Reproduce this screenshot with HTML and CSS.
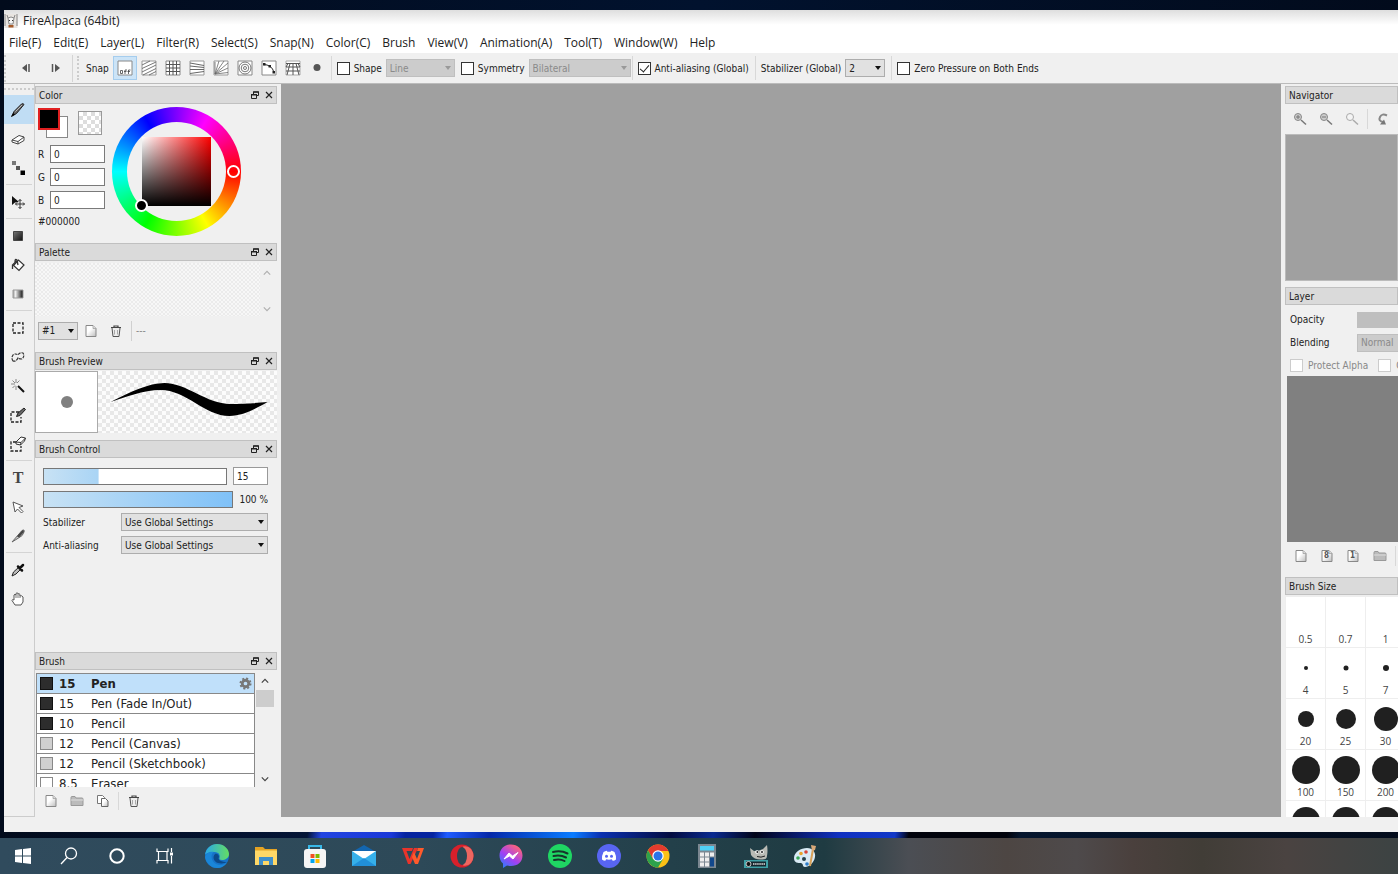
FILE: index.html
```html
<!DOCTYPE html>
<html lang="en">
<head>
    <meta charset="UTF-8">
    <meta name="viewport" content="width=device-width, initial-scale=1.0">
    <title>FireAlpaca (64bit)</title>
    <link rel="stylesheet" href="styles.css">
</head>
<body>

<!-- shared icons -->
<svg class="defs" aria-hidden="true">
    <defs>
        <linearGradient id="paper" x1="0" y1="0" x2="1" y2="1"><stop offset="0.4" stop-color="#fff"/><stop offset="1" stop-color="#bbb"/></linearGradient>
        <linearGradient id="black" x1="0" y1="0" x2="1" y2="1"><stop offset="0" stop-color="#777"/><stop offset="1" stop-color="#111"/></linearGradient>
        <linearGradient id="fade"><stop offset="0" stop-color="#999"/><stop offset="0.25" stop-color="#eee"/><stop offset="1" stop-color="#111"/></linearGradient>
    </defs>
    <symbol id="float" viewBox="0 0 8 8"><path d="M2.5 3V.8h5v3.7H5.5M.5 3.5h5v4h-5z" fill="none" stroke="#222"/><path d="M2 .4h6v1.4H2zM0 3h6v1.4H0z" fill="#222"/></symbol>
    <symbol id="close" viewBox="0 0 8 8"><path d="M1 1l6 6M7 1L1 7" stroke="#222" stroke-width="1.2"/></symbol>
    <symbol id="page" viewBox="0 0 12 12"><path d="M1 .5h7l3 3v8H1z" fill="url(#paper)" stroke="#888"/><path d="M8 .5v3h3" fill="#ddd" stroke="#999" stroke-width=".7"/></symbol>
    <symbol id="pages" viewBox="0 0 12 12"><path d="M.5.5h5l2 2v6h-7z" fill="#fff" stroke="#777"/><path d="M4.500 3.500h4l2.500 2.500v5.500H4.500z" fill="url(#paper)" stroke="#666"/></symbol>
    <symbol id="folder" viewBox="0 0 14 12"><path d="M1 10.500V2.500q0-1 1-1h3l1 1.500h6q1 0 1 1v6.500z" fill="#bbb" stroke="#999"/><path d="M1 5h12" stroke="#ddd"/></symbol>
    <symbol id="trash" viewBox="0 0 12 12"><path d="M2 3l1 8.500h6L10 3" fill="#eee" stroke="#555"/><path d="M1 2.500h10M4 2.500V1h4v1.500" fill="none" stroke="#444" stroke-width="1.200"/><path d="M4.500 5v4.500M7.500 5v4.500" stroke="#aaa"/></symbol>
    <symbol id="up" viewBox="0 0 10 6"><path d="M1 5l4-4 4 4" fill="none" stroke="currentColor" stroke-width="1.500"/></symbol>
    <symbol id="down" viewBox="0 0 10 6"><path d="M1 1l4 4 4-4" fill="none" stroke="currentColor" stroke-width="1.500"/></symbol>
</svg>

<main class="window">
    <header class="titlebar">
        <svg class="app-icon" viewBox="0 0 14 16"><rect x=".5" y="1" width="13" height="14" fill="#e8e4e0"/><path d="M1 1v12M13 1v12M3 2l1 3M11 2l-1 3M4 5q3-2 6 0l-1 6H5z" fill="#f6f6f6" stroke="#888"/><path d="M5 7.500h1M8 7.500h1" stroke="#333"/><path d="M4.500 12h5v2.500h-5z" fill="#a65a2a"/></svg>
        <h1>FireAlpaca (64bit)</h1>
    </header>

    <nav class="menubar">
        <button>File(F)</button>
        <button>Edit(E)</button>
        <button>Layer(L)</button>
        <button>Filter(R)</button>
        <button>Select(S)</button>
        <button>Snap(N)</button>
        <button>Color(C)</button>
        <button>Brush</button>
        <button>View(V)</button>
        <button>Animation(A)</button>
        <button>Tool(T)</button>
        <button>Window(W)</button>
        <button>Help</button>
    </nav>

    <div class="toolbar">
        <div class="history">
            <button aria-label="Previous"><svg width="10" height="10" viewBox="0 0 10 10"><path d="M6 1v8L1 5z" fill="#555"/><path d="M8 1v8" stroke="#555" stroke-width="1.500"/></svg></button>
            <button aria-label="Next"><svg width="10" height="10" viewBox="0 0 10 10"><path d="M4 1v8l5-4z" fill="#555"/><path d="M1.500 1v8" stroke="#555" stroke-width="1.500"/></svg></button>
        </div>
        <div class="snap">
            <span>Snap</span>
            <div class="snap-buttons">
                <button class="active" aria-label="Snap off"><svg viewBox="0 0 16 16"><path d="M1 1h14v14H1z" fill="#fff" stroke="#888"/><path d="M3.500 10.500h2v3h-2zM8 14v-4h2M7 11.500h2.500M11.500 14v-4h2M10.500 11.500H13" fill="none" stroke="#444" stroke-width=".8"/></svg></button>
                <button aria-label="Parallel snap"><svg viewBox="0 0 16 16"><path d="M1 1h14v14H1z" fill="#fff" stroke="#999"/><path d="M1 5l8-4M1 8.500L15 2M1 12l14-7M2 15l13-6.500M8 15l7-3.500" stroke="#666" stroke-width=".9"/></svg></button>
                <button aria-label="Grid snap"><svg viewBox="0 0 16 16"><path d="M1 1h14v14H1z" fill="#fff" stroke="#888"/><path d="M4.500 1v14M8 1v14M11.500 1v14M1 4.500h14M1 8h14M1 11.500h14" stroke="#555"/></svg></button>
                <button aria-label="Vanishing snap"><svg viewBox="0 0 16 16"><path d="M1 1h14v14H1z" fill="#fff" stroke="#999"/><path d="M1 3l14 2.500M1 6l14 1.500M1 9.500h14M1 13.500l14-2" stroke="#666"/></svg></button>
                <button aria-label="Radial snap"><svg viewBox="0 0 16 16"><path d="M1 1h14v14H1z" fill="#fff" stroke="#999"/><path d="M2 14V2M2 14L6 1M2 14L11 1M2 14L15 3M2 14l13-6M2 14l13-1.500" stroke="#666" stroke-width=".8"/></svg></button>
                <button aria-label="Circle snap"><svg viewBox="0 0 16 16"><g fill="none" stroke="#777"><path d="M1 1h14v14H1z" fill="#fff" stroke="#888"/><circle cx="8" cy="8" r="6"/><circle cx="8" cy="8" r="3.800"/><circle cx="8" cy="8" r="1.500"/></g></svg></button>
                <button aria-label="Curve snap"><svg viewBox="0 0 16 16"><path d="M1 1h14v14H1z" fill="#fff" stroke="#888"/><path d="M2 4.500q9 0 11 8" fill="none" stroke="#222"/><path d="M2 3h2.500v2.500H2zM7.500 5h2.500v2.500H7.500zM11.500 11H14v2.500h-2.500z" fill="#222"/></svg></button>
                <button aria-label="Perspective snap"><svg viewBox="0 0 16 16"><path d="M1 1h14v14H1z" fill="#fff" stroke="#aaa"/><path d="M1 3.500h14M1 7h14M1 11h14M5 3.500L2 15M8 3.500V15M11 3.500L14 15M3 3.500L1 7M13 3.500L15 7" stroke="#555"/></svg></button>
                <button aria-label="Snap settings"><svg viewBox="0 0 16 16"><circle cx="8" cy="7.500" r="3.500" fill="#555"/></svg></button>
            </div>
        </div>
        <div class="group">
            <input type="checkbox" id="shape"><label for="shape">Shape</label>
            <span class="select off shape-select"><select aria-label="Shape type" disabled><option>Line</option></select></span>
        </div>
        <div class="group plain">
            <input type="checkbox" id="symmetry"><label for="symmetry">Symmetry</label>
            <span class="select off symmetry-select"><select aria-label="Symmetry type" disabled><option>Bilateral</option></select></span>
        </div>
        <div class="group">
            <input type="checkbox" id="aa" checked><label for="aa">Anti-aliasing (Global)</label>
        </div>
        <div class="group">
            <label for="stab">Stabilizer (Global)</label>
            <span class="select stab-select"><select id="stab"><option>2</option></select></span>
        </div>
        <div class="group">
            <input type="checkbox" id="zero"><label for="zero">Zero Pressure on Both Ends</label>
        </div>
    </div>

    <div class="workspace">
        <aside class="toolbox">
            <button class="active" aria-label="Brush"><svg viewBox="0 0 16 16"><path d="M1.500 14.500L4 9.500 11.500 2q1.500-1 2.500.5L6.500 11.500z" fill="#666" stroke="#222"/><path d="M1.500 14.500l2-3.500 1.500 1.500z" fill="#000"/><path d="M5.500 9.500L12 3" stroke="#bbb"/></svg></button>
            <button aria-label="Eraser"><svg viewBox="0 0 16 16"><path d="M2 9l7-4.500 5 1.500v3.500L8 13l-6-2z" fill="#fff" stroke="#444"/><path d="M2 9l6 1.500 6-4.500M8 10.500V13" fill="none" stroke="#444"/></svg></button>
            <button aria-label="Dot tool"><svg viewBox="0 0 16 16"><path d="M2 1h4v4H2z" fill="#777"/><path d="M6 6h4v4H6z" fill="#555"/><path d="M10.500 10.500h4.500V15h-4.500z" fill="#000"/></svg></button>
            <hr>
            <button aria-label="Move"><svg viewBox="0 0 16 16"><path d="M2 2v9l3-2.500 4-.5z" fill="#111"/><path d="M10 5.500v9M5.500 10h9M8.500 7L10 5.500 11.500 7M8.500 13l1.500 1.500 1.500-1.500M7 8.500L5.500 10 7 11.500M13 8.500l1.500 1.500-1.500 1.500" fill="none" stroke="#333"/></svg></button>
            <hr>
            <button aria-label="Fill shape"><svg viewBox="0 0 16 16"><path d="M3.500 3.500h9v9h-9z" fill="url(#black)" stroke="#444"/></svg></button>
            <button aria-label="Bucket"><svg viewBox="0 0 16 16"><path d="M3.500 8.500L8.500 3l5.500 5-5 5.500z" fill="#fff" stroke="#333" stroke-width="1.200"/><path d="M2.500 12V8l4-4M8 8l-1-5q-2-2-2 2" fill="none" stroke="#333" stroke-width="1.300"/></svg></button>
            <button aria-label="Gradient"><svg viewBox="0 0 16 16"><path d="M3 4h10v8H3z" fill="url(#fade)" stroke="#999"/></svg></button>
            <hr>
            <button aria-label="Select"><svg viewBox="0 0 16 16"><path d="M3 3h10v10H3z" fill="none" stroke="#222" stroke-width="1.300" stroke-dasharray="3 1.500"/></svg></button>
            <button aria-label="Lasso"><svg viewBox="0 0 16 16"><path d="M3 12q-2-3 0-6 3-2 5 0 2-3 5-2 2 3-1 6-3 0-4-1-2 4-5 3z" fill="none" stroke="#333" stroke-width="1.200" stroke-dasharray="3 1"/></svg></button>
            <button aria-label="Magic wand"><svg viewBox="0 0 16 16"><path d="M8 8l6 6" stroke="#111" stroke-width="2"/><path d="M6 1v4M6 8v4M1 6h4M2.500 2.500L5 5M9.500 2.500L7 5M2.500 10L5 7.500" stroke="#888"/></svg></button>
            <button aria-label="Select pen"><svg viewBox="0 0 16 16"><path d="M9 5H1v10h10v-5" fill="none" stroke="#222" stroke-width="1.300" stroke-dasharray="3 1.500"/><path d="M6.500 9.500L8 6l6-5 1.500 1.500L10 8.500z" fill="#666" stroke="#222"/></svg></button>
            <button aria-label="Select eraser"><svg viewBox="0 0 16 16"><path d="M6 6H1v9h10v-5" fill="none" stroke="#222" stroke-width="1.300" stroke-dasharray="3 1.500"/><path d="M6 6l5-5 4.500 1-1 3-4 4-4.500-1z" fill="#fff" stroke="#333"/><path d="M6 6l5 .5 4.500-4.500M11 6.500L10.500 9" fill="none" stroke="#333"/></svg></button>
            <hr>
            <button aria-label="Text" class="text-tool">T</button>
            <button aria-label="Operation"><svg viewBox="0 0 16 16"><path d="M3 3l10 4-4 1.500 4 4-1.500 1.500-4-4L5 13z" fill="#fff" stroke="#555"/></svg></button>
            <button aria-label="Divide"><svg viewBox="0 0 16 16"><path d="M2 14L12 2.500q3-1.500 2 1.500-1 4-5.500 6z" fill="#ccc" stroke="#666"/><path d="M7 8.500l5-6q3-1 1.500 2L9 9.500z" fill="#444"/></svg></button>
            <hr>
            <button aria-label="Eyedropper"><svg viewBox="0 0 16 16"><path d="M2 14l1.500-4L9 5l2 2-5 5z" fill="#bbb" stroke="#222"/><path d="M8 4.500l4 4M10 6l3-3" stroke="#111" stroke-width="2.500" stroke-linecap="round"/></svg></button>
            <button aria-label="Hand"><svg viewBox="0 0 16 16"><path d="M5 14L2 9.500q0-1.500 2-.5V4q1-1.500 2 0V2.500q1-1.500 2 0V3q1-1 2 .5V5q1.500-1 3 1v5l-2 3z" fill="#fff" stroke="#555"/><path d="M6 4v3M8 3v4M10 4v3" stroke="#777"/></svg></button>
        </aside>

        <div class="dock left-dock">
            <section class="panel color-panel">
                <header><h2>Color</h2><button aria-label="Float"><svg><use href="#float"/></svg></button><button aria-label="Close"><svg><use href="#close"/></svg></button></header>
                <div class="color-body">
                    <div class="color-side">
                        <div class="swatches">
                            <div class="fg-bg"><span class="bg"></span><span class="fg"></span></div>
                            <span class="transparent"></span>
                        </div>
                        <div class="channel"><label for="r">R</label><input type="text" id="r" value="0"></div>
                        <div class="channel"><label for="g">G</label><input type="text" id="g" value="0"></div>
                        <div class="channel"><label for="b">B</label><input type="text" id="b" value="0"></div>
                        <p>#000000</p>
                    </div>
                    <div class="wheel">
                        <div class="wheel-hole"><div class="sv-box"></div></div>
                        <span class="hue-mark"></span>
                        <span class="sv-mark"></span>
                    </div>
                </div>
            </section>

            <section class="panel palette-panel">
                <header><h2>Palette</h2><button aria-label="Float"><svg><use href="#float"/></svg></button><button aria-label="Close"><svg><use href="#close"/></svg></button></header>
                <div class="palette-body">
                    <div class="palette-grid"></div>
                    <div class="palette-scroll"><svg><use href="#up"/></svg><svg><use href="#down"/></svg></div>
                </div>
                <div class="palette-tools">
                    <span class="select palette-select"><select aria-label="Palette number"><option>#1</option></select></span>
                    <button aria-label="Add color"><svg class="icon"><use href="#page"/></svg></button>
                    <button aria-label="Delete color"><svg class="icon"><use href="#trash"/></svg></button>
                    <span class="palette-name">---</span>
                </div>
            </section>

            <section class="panel preview-panel">
                <header><h2>Brush Preview</h2><button aria-label="Float"><svg><use href="#float"/></svg></button><button aria-label="Close"><svg><use href="#close"/></svg></button></header>
                <div class="preview-body">
                    <div class="preview-dot"><span></span></div>
                    <div class="preview-stroke">
                        <svg viewBox="0 0 178 62"><path d="M12 31C32 21 50 12 66 12c22 0 42 21 66 21 12 0 25-1 37-2-9 5-24 14-38 14C106 45 88 19 62 19 44 19 28 26 12 31z" fill="#000"/></svg>
                    </div>
                </div>
            </section>

            <section class="panel control-panel">
                <header><h2>Brush Control</h2><button aria-label="Float"><svg><use href="#float"/></svg></button><button aria-label="Close"><svg><use href="#close"/></svg></button></header>
                <div class="control-body">
                    <div class="control-row size-row">
                        <input type="range" class="slider size-slider" aria-label="Size" value="30">
                        <input type="text" aria-label="Size value" value="15">
                    </div>
                    <div class="control-row">
                        <input type="range" class="slider" id="opacity" value="100">
                        <label for="opacity">100 %</label>
                    </div>
                    <div class="control-row">
                        <label class="name" for="brush-stab">Stabilizer</label>
                        <span class="select"><select id="brush-stab"><option>Use Global Settings</option></select></span>
                    </div>
                    <div class="control-row">
                        <label class="name" for="brush-aa">Anti-aliasing</label>
                        <span class="select"><select id="brush-aa"><option>Use Global Settings</option></select></span>
                    </div>
                </div>
            </section>

            <section class="panel brush-panel">
                <header><h2>Brush</h2><button aria-label="Float"><svg><use href="#float"/></svg></button><button aria-label="Close"><svg><use href="#close"/></svg></button></header>
                <div class="brush-body">
                    <ul class="brush-list">
                        <li class="active"><i class="chip dark"></i><span>15</span>Pen
                            <svg class="gear" viewBox="0 0 14 14"><circle cx="7" cy="7" r="5.500" fill="none" stroke="#777" stroke-width="2" stroke-dasharray="2.200 2.120"/><circle cx="7" cy="7" r="3.500" fill="none" stroke="#777" stroke-width="3"/></svg>
                        </li>
                        <li><i class="chip dark"></i><span>15</span>Pen (Fade In/Out)</li>
                        <li><i class="chip dark"></i><span>10</span>Pencil</li>
                        <li><i class="chip grey"></i><span>12</span>Pencil (Canvas)</li>
                        <li><i class="chip grey"></i><span>12</span>Pencil (Sketchbook)</li>
                        <li><i class="chip"></i><span>8.5</span>Eraser</li>
                    </ul>
                    <div class="brush-scroll"><svg><use href="#up"/></svg><i></i><svg><use href="#down"/></svg></div>
                </div>
                <div class="brush-tools">
                    <button aria-label="Add brush"><svg class="icon"><use href="#page"/></svg></button>
                    <button aria-label="Add folder"><svg class="icon wide"><use href="#folder"/></svg></button>
                    <button aria-label="Duplicate brush"><svg class="icon"><use href="#pages"/></svg></button>
                    <button class="split" aria-label="Delete brush"><svg class="icon"><use href="#trash"/></svg></button>
                </div>
            </section>
        </div>

        <div class="canvas"></div>

        <div class="dock right-dock">
            <section class="panel">
                <header><h2>Navigator</h2></header>
                <div class="nav-tools">
                    <button aria-label="Zoom in"><svg viewBox="0 0 14 14"><circle cx="5" cy="5" r="3.500" fill="#ccc" stroke="#888"/><path d="M3 5h4M5 3v4" stroke="#777"/><path d="M8 8l5 4.500" stroke="#777" stroke-width="1.500"/></svg></button>
                    <button aria-label="Zoom out"><svg viewBox="0 0 14 14"><circle cx="5" cy="5" r="3.500" fill="#ccc" stroke="#888"/><path d="M3 5h4" stroke="#777"/><path d="M8 8l5 4.500" stroke="#777" stroke-width="1.500"/></svg></button>
                    <button aria-label="Fit"><svg viewBox="0 0 14 14"><circle cx="5" cy="5" r="3.500" fill="#f4f4f4" stroke="#aaa"/><path d="M8 8l5 4.500" stroke="#aaa" stroke-width="1.500"/></svg></button>
                    <button class="split" aria-label="Rotate left"><svg viewBox="0 0 14 14"><path d="M10 3.500Q5 1 3 5t3 5" fill="none" stroke="#888" stroke-width="2"/><path d="M3 12.500L7 7.500l2 5z" fill="#777"/></svg></button>
                </div>
                <div class="nav-view"></div>
            </section>

            <section class="panel layer-panel">
                <header><h2>Layer</h2></header>
                <div class="layer-row"><label for="layer-opacity">Opacity</label><input type="range" id="layer-opacity" class="layer-slider" disabled></div>
                <div class="layer-row"><label for="blending">Blending</label><span class="select off"><select id="blending" disabled><option>Normal</option></select></span></div>
                <div class="layer-checks">
                    <input type="checkbox" id="alpha" disabled><label for="alpha">Protect Alpha</label>
                    <input type="checkbox" id="clip" disabled><label for="clip">Clipping</label>
                </div>
                <div class="layer-list"></div>
                <div class="layer-tools">
                    <button aria-label="Add layer"><svg class="icon"><use href="#page"/></svg></button>
                    <button aria-label="Add 8bit layer"><svg class="icon"><use href="#page"/></svg><b>8</b></button>
                    <button aria-label="Add 1bit layer"><svg class="icon"><use href="#page"/></svg><b>1</b></button>
                    <button aria-label="Add folder"><svg class="icon wide"><use href="#folder"/></svg></button>
                    <hr>
                </div>
            </section>

            <section class="panel size-panel">
                <header><h2>Brush Size</h2></header>
                <div class="size-grid">
                    <button><i></i>0.5</button>
                    <button><i></i>0.7</button>
                    <button><i></i>1</button>
                    <button><i class="d4"></i>4</button>
                    <button><i class="d5"></i>5</button>
                    <button><i class="d7"></i>7</button>
                    <button><i class="d20"></i>20</button>
                    <button><i class="d25"></i>25</button>
                    <button><i class="d30"></i>30</button>
                    <button><i class="full"></i>100</button>
                    <button><i class="full"></i>150</button>
                    <button><i class="full"></i>200</button>
                    <button aria-label="300"><i class="full"></i></button>
                    <button aria-label="400"><i class="full"></i></button>
                    <button aria-label="500"><i class="full"></i></button>
                </div>
            </section>
        </div>
    </div>
    <footer class="statusbar"></footer>
</main>

<div class="wallpaper"></div>

<nav class="taskbar">
    <button class="sys" aria-label="Start"><svg viewBox="0 0 24 24"><path d="M4 6l7-1v6.500H4zM12 4.900L20 4v7.500h-8zM4 12.500h7V19l-7-1zM12 12.500h8V20l-8-.9z" fill="#fff"/></svg></button>
    <button class="sys" aria-label="Search"><svg viewBox="0 0 24 24"><circle cx="14" cy="9.500" r="5.500" fill="none" stroke="#fff" stroke-width="1.300"/><path d="M10 13.500l-6 6.500" stroke="#fff" stroke-width="1.300"/></svg></button>
    <button class="sys" aria-label="Cortana"><svg viewBox="0 0 24 24"><circle cx="12" cy="12" r="6.700" fill="none" stroke="#fff" stroke-width="2"/></svg></button>
    <button class="sys" aria-label="Task view"><svg viewBox="0 0 24 24"><path d="M4 4.500v3h11v-3M5.500 7.500v9h8.500v-9M4 19.500v-3h11v3M18.500 4v4M18.500 12v7.500" fill="none" stroke="#fff" stroke-width="1.200"/><path d="M17 8.500h3v3h-3z" fill="#fff"/></svg></button>
    <button aria-label="Edge"><svg viewBox="0 0 24 24"><defs><linearGradient id="edge"><stop offset="0" stop-color="#2aa8e8"/><stop offset="1" stop-color="#64dd62"/></linearGradient></defs><circle cx="12" cy="12" r="12" fill="#1673c8"/><path d="M0 11C1 4 6 0 12 0c7 0 12 5 12 10 0 4-4 6-7 6-2 0-3-1-2.500-2 .8-2 0-6-5-6C5 8 1 9 0 11z" fill="url(#edge)"/><path d="M9 8c-4 2-3 9 2 12 4 2 8 1 11-2-2 4-6 6-10 6C6 24 1 19 0 13c1-4 5-6 9-5z" fill="#1a86d8"/><path d="M10 10c-3 3-1 8 3 9 4 1 7 0 9-1-5 0-10-2-8-5 0-2-2-4-4-3z" fill="#0c4a8a"/></svg></button>
    <button aria-label="File Explorer"><svg viewBox="0 0 24 24"><path d="M1 3h8l2 2h12v16H1z" fill="#e5a323"/><path d="M1 6.500h22V21H1z" fill="#ffd867"/><path d="M5 21v-8h14v8h-4v-4H9v4z" fill="#3f8fcb"/></svg></button>
    <button aria-label="Store"><svg viewBox="0 0 24 24"><path d="M6 6V2h12v4" fill="none" stroke="#38b8e8" stroke-width="2"/><rect x="1" y="5" width="22" height="19" rx="3" fill="#f5f5f5"/><path d="M7.500 10h4v4h-4z" fill="#f25022"/><path d="M12.500 10h4v4h-4z" fill="#7fba00"/><path d="M7.500 15h4v4h-4z" fill="#00a4ef"/><path d="M12.500 15h4v4h-4z" fill="#ffb900"/></svg></button>
    <button aria-label="Mail"><svg viewBox="0 0 24 24"><path d="M0 8l12-7 12 7v14H0z" fill="#1366b0"/><path d="M0 7h24v15H0z" fill="#36b0ea"/><path d="M0 7h24L12 15z" fill="#fff"/><path d="M0 22L12 14l12 8z" fill="#218fd8"/></svg></button>
    <button aria-label="WPS Office"><svg viewBox="0 0 24 24"><path d="M1 4h11l-1 3H5.500l3 8 4.500-11h4L9.500 20H7z" fill="#e8342b"/><path d="M17 4h6l-6 16h-3l-3-7 2-5 3 7 3-8h-3z" fill="#ff5a2b"/></svg></button>
    <button aria-label="Opera"><svg viewBox="0 0 24 24"><circle cx="12" cy="12" r="11.500" fill="#d8202b"/><path d="M13 2.500q5-1 8 2.500 5 7 0 14-3 3.500-8 2.500z" fill="#ee6660"/><ellipse cx="12" cy="12" rx="5" ry="9" fill="#2b4754"/></svg></button>
    <button aria-label="Messenger"><svg viewBox="0 0 24 24"><defs><linearGradient id="msg" x1="0" y1="1" x2=".7" y2="0"><stop offset="0" stop-color="#168aff"/><stop offset=".5" stop-color="#a040f5"/><stop offset="1" stop-color="#ff6478"/></linearGradient></defs><path d="M12 .5c6.500 0 11.500 4.500 11.500 11S18.500 22 12 22q-2 0-4-.5L4 24v-4.500Q.5 16.500.5 11.500C.5 5 5.500.5 12 .5z" fill="url(#msg)"/><path d="M5 15l5-6 3.500 3L19 8.500l-5 6.500-3.500-3z" fill="#fff" stroke="#fff"/></svg></button>
    <button aria-label="Spotify"><svg viewBox="0 0 24 24"><circle cx="12" cy="12" r="12" fill="#1fd663"/><path d="M5 8q8-2 14.500 1.500M5.500 12q7-1.500 12.500 1.500M6 16q6-1.500 10.500 1" fill="none" stroke="#17352b" stroke-width="2" stroke-linecap="round"/></svg></button>
    <button aria-label="Discord"><svg viewBox="0 0 24 24"><circle cx="12" cy="12" r="12" fill="#5865f2"/><path d="M6.500 8Q8 7 9.800 6.800l.6 1q1.600-.3 3.200 0l.6-1Q16 7 17.500 8q2 4 1.500 7.500-1.500 1.200-3.300 1.300l-.9-1.500q-2.800.7-5.600 0l-.9 1.500Q6.500 16.700 5 15.500 4.500 12 6.500 8z" fill="#fff"/><circle cx="9.500" cy="12.200" r="1.500" fill="#5865f2"/><circle cx="14.500" cy="12.200" r="1.500" fill="#5865f2"/></svg></button>
    <button aria-label="Chrome"><svg viewBox="0 0 24 24"><circle cx="12" cy="12" r="11.500" fill="#fbc116"/><path d="M2 6.300a11.500 11.500 0 0120 0L22 7H12L7 15z" fill="#e33b2e"/><path d="M2 6.300A11.500 11.500 0 0012 23.500L17 15l-10 0z" fill="#2da24c"/><circle cx="12" cy="12" r="5.700" fill="#fff"/><circle cx="12" cy="12" r="4.500" fill="#2a74e8"/></svg></button>
    <button aria-label="Calculator"><svg viewBox="0 0 24 24"><path d="M3 0h18v24H3z" fill="#7b8791"/><path d="M5 2h14v4.500H5z" fill="#4fd0f5"/><path d="M5 8.500h4v4H5zM10 8.500h4v4h-4zM15 8.500h4v4h-4zM5 13.500h4v4H5zM10 13.500h4v4h-4zM5 18.500h4v4H5zM10 18.500h4v4h-4z" fill="#eee"/><path d="M15 13.500h4v9h-4z" fill="#12488c"/></svg></button>
    <button aria-label="GIMP"><svg viewBox="0 0 24 24"><path d="M6 4l4 3 5-.5L19 5l4-4q1 6 0 11 0 4-6 3.500-7 0-10-4.500z" fill="#b9bab4"/><circle cx="13" cy="8" r="1.800" fill="#fff"/><circle cx="18" cy="8" r="1.800" fill="#fff"/><circle cx="13.400" cy="8" r="1" fill="#222"/><circle cx="18" cy="8" r="1" fill="#222"/><path d="M13 12.500q4 1.500 8-.5" fill="none" stroke="#222"/><path d="M0 16h24v8H0z" fill="#3fa0a6"/><path d="M2 17.500h20v5H2z" fill="#16262e"/><circle cx="4.500" cy="20" r="2.500" fill="#111" stroke="#ccc"/><path d="M9 20h12" stroke="#ddd" stroke-width="1.500" stroke-dasharray="1.500 .6"/></svg></button>
    <button aria-label="Paint"><svg viewBox="0 0 24 24"><path d="M1 14C1 8 8 4 14 4s9 5 8 9c-1 6-6 10-10 10-3 0-1-3-4-4-3 0-7 0-7-5z" fill="#d9eaf5"/><circle cx="11" cy="15" r="2" fill="#28404a"/><circle cx="5" cy="14" r="1.800" fill="#3aa856"/><circle cx="8" cy="9.500" r="1.800" fill="#e8a22c"/><circle cx="13" cy="8" r="1.800" fill="#d9463b"/><circle cx="14" cy="20" r="1.800" fill="#2c7cc8"/><path d="M20 5l-3 17" stroke="#d8a25a" stroke-width="2"/><path d="M18 1l5 1-1 4-3 1z" fill="#d9a878"/></svg></button>
</nav>

</body>
</html>
```
FILE: styles.css
```css
* {
    margin: 0;
    padding: 0;
    box-sizing: border-box;
}

body {
    display: flex;
    flex-direction: column;
    height: 100vh;
    padding-top: 10px;
    overflow: hidden;
    background: linear-gradient(90deg, #020b1c, #01122e 50%, #020b1c);
    color: #222;
    font-family: "DejaVu Sans Condensed", "DejaVu Sans", sans-serif;
    font-size: 10px;
}

button {
    border: none;
    background: none;
    font: inherit;
    color: inherit;
}

input, select {
    font: inherit;
    color: inherit;
}

.defs {
    position: absolute;
    width: 0;
    height: 0;
}

.window {
    flex: 1;
    min-height: 0;
    display: flex;
    flex-direction: column;
    margin-left: 4px;
    background: #f0f0f0;
}

/* title and menus */
.titlebar {
    display: flex;
    align-items: center;
    gap: 5px;
    height: 21px;
    background: linear-gradient(#dedede, #fff 70%);
}

.titlebar h1 {
    font: 12px "Open Sans", sans-serif;
}

.app-icon {
    width: 14px;
    height: 16px;
}

.menubar {
    display: flex;
    align-items: center;
    gap: 12px;
    height: 22px;
    padding-left: 5px;
    background: #fff;
    font: 12px "Open Sans", sans-serif;
}

/* toolbar */
.toolbar {
    display: flex;
    align-items: center;
    height: 31px;
    border-bottom: 1px solid #bbb;
    white-space: nowrap;
}

.history {
    display: flex;
    align-items: center;
    gap: 20px;
    height: 27px;
    padding: 0 11px 0 15px;
    border-left: 2px dotted #ccc;
    border-right: 1px solid #d4d4d4;
}

.history button {
    display: flex;
}

.snap {
    display: flex;
    align-items: center;
    gap: 4px;
    height: 24px;
    margin: 0 2px 0 4px;
    padding-left: 7px;
    border-left: 2px dotted #ccc;
}

.snap-buttons {
    display: flex;
}

.snap-buttons button {
    display: flex;
    align-items: center;
    justify-content: center;
    width: 24px;
    height: 24px;
}

.snap-buttons svg {
    width: 16px;
    height: 16px;
}

.snap-buttons .active {
    background: #cce4f7;
    border: 1px solid #a5cdee;
}

.group {
    display: flex;
    align-items: center;
    gap: 4px;
    height: 24px;
    padding-left: 5px;
    margin-right: 6px;
    border-left: 1px solid #d8d8d8;
}

.group.plain {
    border-left: none;
    padding-left: 0;
    margin-right: 1px;
}

input[type="checkbox"] {
    appearance: none;
    width: 13px;
    height: 13px;
    border: 1px solid #333;
    background: #fff;
}

input[type="checkbox"]:disabled {
    border-color: #ccc;
}

input[type="checkbox"]:checked::after {
    content: "";
    display: block;
    width: 4px;
    height: 8px;
    margin: 0 auto;
    border: solid #222;
    border-width: 0 1px 1px 0;
    transform: rotate(40deg);
}

.select {
    position: relative;
    display: inline-flex;
    height: 18px;
}

.select::after {
    content: "";
    position: absolute;
    right: 4px;
    top: 7px;
    border: 3px solid transparent;
    border-top: 4px solid #111;
    border-bottom: none;
}

.select select {
    appearance: none;
    width: 100%;
    padding: 0 3px;
    border: 1px solid #adadad;
    background: #e1e1e1;
}

.select.off select {
    background: #ccc;
    border-color: #bfbfbf;
    color: #8a8a8a;
    opacity: 1;
}

.select.off::after {
    border-top-color: #999;
}

.shape-select {
    width: 69px;
}

.symmetry-select {
    width: 102px;
}

.stab-select {
    width: 40px;
}

/* workspace */
.workspace {
    flex: 1;
    min-height: 0;
    display: flex;
}

.toolbox {
    display: flex;
    flex-direction: column;
    flex-shrink: 0;
    width: 31px;
    padding-top: 4px;
    border-right: 1px solid #ccc;
    border-bottom: 1px solid #ccc;
}

.toolbox::before {
    content: "";
    height: 5px;
    border-top: 2px dotted #ccc;
}

.toolbox button {
    display: flex;
    align-items: center;
    justify-content: center;
    height: 29px;
    padding-right: 2px;
}

.toolbox svg {
    width: 16px;
    height: 16px;
}

.toolbox hr {
    margin: 2px;
    border: none;
    border-top: 1px solid #d4d4d4;
}

.toolbox .active {
    background: #c0ddf4;
}

.toolbox .text-tool {
    font: bold 16px "Liberation Serif", serif;
    color: #444;
}

.dock {
    display: flex;
    flex-direction: column;
    flex-shrink: 0;
    gap: 7px;
    padding-top: 2px;
}

.left-dock {
    width: 246px;
    padding-right: 4px;
}

.panel {
    display: flex;
    flex-direction: column;
}

.panel header {
    display: flex;
    align-items: center;
    gap: 6px;
    height: 18px;
    flex-shrink: 0;
    padding: 0 3px;
    border: 1px solid #c0c0c0;
    background: #dadada;
}

.panel header h2 {
    flex: 1;
    font-size: 10px;
    font-weight: normal;
    white-space: nowrap;
}

.panel header button {
    display: flex;
}

.panel header svg {
    width: 8px;
    height: 8px;
}

.icon {
    width: 12px;
    height: 12px;
}

.icon.wide {
    width: 14px;
}

/* color */
.color-body {
    display: flex;
    gap: 7px;
    height: 132px;
    padding: 3px 3px 0;
}

.color-side {
    display: flex;
    flex-direction: column;
    gap: 5px;
    width: 67px;
}

.color-side p {
    margin-top: 2px;
}

.swatches {
    display: flex;
    justify-content: space-between;
    height: 33px;
    padding: 1px 3px 0 0;
}

.fg-bg {
    position: relative;
    width: 30px;
}

.fg, .bg {
    position: absolute;
    width: 22px;
    height: 22px;
}

.fg {
    left: 0;
    top: 0;
    background: #000;
    border: 2px solid #e02020;
}

.bg {
    right: 0;
    top: 8px;
    background: #fff;
    border: 1px solid #888;
}

.transparent {
    width: 24px;
    height: 24px;
    margin-top: 3px;
    border: 1px solid #999;
    background: repeating-conic-gradient(#ddd 0 25%, #fff 0 50%) 0 0 / 8px 8px;
}

.channel {
    display: flex;
    align-items: center;
    justify-content: space-between;
}

.channel input {
    width: 55px;
    height: 18px;
    padding: 0 3px;
    border: 1px solid #7a7a7a;
    background: #fff;
}

.wheel {
    position: relative;
    width: 129px;
    height: 129px;
    padding: 15px;
    border-radius: 50%;
    background: conic-gradient(from 90deg, #f00, #ff0, #0f0, #0ff, #00f, #f0f, #f00);
}

.wheel-hole {
    display: flex;
    align-items: center;
    justify-content: center;
    height: 100%;
    border-radius: 50%;
    background: #f0f0f0;
}

.sv-box {
    width: 69px;
    height: 69px;
    background: linear-gradient(to top, #000, transparent), linear-gradient(to right, #fff, #f00);
}

.hue-mark, .sv-mark {
    position: absolute;
    width: 13px;
    height: 13px;
    border: 2px solid #fff;
    border-radius: 50%;
}

.hue-mark {
    right: 1px;
    top: 58px;
}

.sv-mark {
    left: 23px;
    top: 92px;
    background: #000;
}

/* palette */
.palette-body {
    display: flex;
    height: 55px;
    padding-top: 2px;
}

.palette-grid {
    flex: 1;
    background: repeating-conic-gradient(#ebebeb 0 25%, #f7f7f7 0 50%) 0 0 / 4px 4px;
}

.palette-scroll {
    display: flex;
    flex-direction: column;
    justify-content: space-between;
    padding: 7px 6px 4px 3px;
    color: #b0b0b0;
}

.palette-scroll svg, .brush-scroll svg {
    width: 8px;
    height: 6px;
}

.palette-tools {
    display: flex;
    align-items: center;
    gap: 13px;
    height: 29px;
    padding-left: 3px;
}

.palette-tools button {
    display: flex;
}

.palette-select {
    width: 40px;
    margin-right: -6px;
}

.palette-name {
    height: 20px;
    margin-left: -4px;
    padding: 4px;
    border-left: 1px solid #d0d0d0;
    color: #888;
}

/* brush preview */
.preview-body {
    display: flex;
    height: 63px;
    padding-top: 1px;
}

.preview-dot {
    display: flex;
    align-items: center;
    justify-content: center;
    width: 63px;
    border: 1px solid #aaa;
    background: #fff;
}

.preview-dot span {
    width: 12px;
    height: 12px;
    border-radius: 50%;
    background: #808080;
}

.preview-stroke {
    flex: 1;
    background: repeating-conic-gradient(#e8e8e8 0 25%, #fcfcfc 0 50%) 0 0 / 8px 8px;
}

.preview-stroke svg {
    width: 100%;
    height: 62px;
}

/* brush control */
.control-panel {
    flex: 1;
}

.control-body {
    display: flex;
    flex-direction: column;
    gap: 5px;
    padding: 9px 9px 0 8px;
}

.control-row {
    display: flex;
    align-items: center;
    justify-content: space-between;
    gap: 6px;
    height: 18px;
}

.control-row .select {
    flex: 1;
}

.control-row .name {
    width: 72px;
}

.control-row input[type="text"] {
    width: 35px;
    height: 18px;
    padding: 0 3px;
    border: 1px solid #999;
}

.slider {
    appearance: none;
    flex: 1;
    min-width: 0;
    height: 17px;
    border: 1px solid #777;
    background: linear-gradient(90deg, #c8e2f4, #7fc1f8);
}

.size-slider {
    background: linear-gradient(90deg, #c8e2f4, #a9d4f5) 0 0 / 30% 100% no-repeat #fff;
}

.slider::-webkit-slider-thumb, .layer-slider::-webkit-slider-thumb {
    appearance: none;
    width: 1px;
    height: 15px;
}

/* brush list */
.brush-panel {
    height: 165px;
}

.brush-body {
    display: flex;
    height: 117px;
    padding: 3px 2px 0 1px;
}

.brush-list {
    flex: 1;
    overflow: hidden;
    list-style: none;
    border: 1px solid #888;
    border-bottom: none;
    background: #fff;
    font-size: 13px;
}

.brush-list li {
    display: flex;
    align-items: center;
    height: 20px;
    padding-left: 3px;
    border-bottom: 1px solid #888;
}

.brush-list li.active {
    background: #c0e0fa;
    font-weight: bold;
}

.brush-list span {
    width: 32px;
}

.chip {
    width: 13px;
    height: 13px;
    margin-right: 6px;
    border: 1px solid #888;
    background: #fff;
}

.chip.dark {
    background: #2d2d2d;
    border-color: #111;
}

.chip.grey {
    background: #d0d0d0;
}

.gear {
    width: 13px;
    height: 13px;
    margin-left: auto;
    margin-right: 2px;
}

.brush-scroll {
    display: flex;
    flex-direction: column;
    align-items: center;
    width: 20px;
    padding: 5px 0;
    color: #444;
}

.brush-scroll i {
    width: 18px;
    height: 17px;
    margin: 6px 0 auto;
    background: #cdcdcd;
}

.brush-tools {
    display: flex;
    align-items: center;
    gap: 13px;
    height: 28px;
    padding-left: 10px;
}

.brush-tools button {
    display: flex;
}

.split {
    margin-left: -4px;
    padding: 3px 0 3px 9px;
    border-left: 1px solid #d8d8d8;
}

/* canvas and right side */
.canvas {
    flex: 1;
    background: #a0a0a0;
}

.right-dock {
    width: 117px;
    padding-left: 4px;
    overflow: hidden;
}

.nav-tools {
    display: flex;
    align-items: center;
    gap: 12px;
    height: 30px;
    padding-left: 8px;
}

.nav-tools button {
    display: flex;
}

.nav-tools svg {
    width: 14px;
    height: 14px;
    flex-shrink: 0;
}

.nav-view {
    height: 147px;
    background: #a0a0a0;
    border: 1px solid #bbb;
}

.layer-panel {
    margin-top: -1px;
}

.layer-row {
    display: flex;
    align-items: center;
    height: 23px;
    padding-left: 5px;
}

.layer-panel header {
    margin-bottom: 3px;
}

.layer-row label {
    flex-shrink: 0;
    width: 67px;
}

.layer-row .select {
    width: 120px;
    flex-shrink: 0;
}

.layer-slider {
    appearance: none;
    flex-shrink: 0;
    width: 120px;
    height: 16px;
    background: #bfbfbf;
}

.layer-checks {
    display: flex;
    align-items: center;
    gap: 5px;
    height: 22px;
    padding-left: 5px;
    color: #888;
    white-space: nowrap;
}

.layer-checks input {
    flex-shrink: 0;
}

.layer-checks label {
    margin-right: 5px;
}

.layer-list {
    height: 166px;
    margin-left: 2px;
    background: #808080;
}

.layer-tools {
    display: flex;
    align-items: center;
    gap: 14px;
    height: 28px;
    padding-left: 10px;
}

.layer-tools button {
    position: relative;
    display: flex;
}

.layer-tools b {
    position: absolute;
    left: 3px;
    top: 1px;
    font-size: 8px;
    color: #555;
}

.layer-tools hr {
    height: 20px;
    margin-left: -6px;
    border: none;
    border-left: 1px solid #d8d8d8;
}

.size-panel {
    flex: 1;
    min-height: 0;
}

.size-grid {
    flex: 1;
    min-height: 0;
    overflow: hidden;
    display: grid;
    grid-template-columns: repeat(3, 39px);
    grid-auto-rows: 50px;
    gap: 1px;
    padding: 2px 0 0 1px;
    background: #eee;
}

.size-grid button {
    position: relative;
    display: flex;
    align-items: flex-end;
    justify-content: center;
    padding-bottom: 1px;
    background: #fff;
    font: 10px "Open Sans", sans-serif;
    color: #444;
}

.size-grid i {
    position: absolute;
    left: 50%;
    top: 20px;
    transform: translate(-50%, -50%);
    border-radius: 50%;
    background: #202020;
}

.size-grid .d4 { width: 4px; height: 4px; }
.size-grid .d5 { width: 5px; height: 5px; }
.size-grid .d7 { width: 6px; height: 6px; }
.size-grid .d20 { width: 16px; height: 16px; }
.size-grid .d25 { width: 20px; height: 20px; }
.size-grid .d30 { width: 24px; height: 24px; }
.size-grid .full { width: 28px; height: 28px; }

.statusbar {
    height: 15px;
    background: #f0f0f0;
}

/* desktop */
.wallpaper {
    height: 6px;
    background: linear-gradient(100deg, #020b1c, #041536 22%, #2244e0 23%, #1a38d8 28%, #0524a0 29%, #0524a0 31%, #1f5cff 32%, #0528a8 35%, #0a7cff 41%, #0a30b0 43%, #030c40 48%, #0a2a90 51%, #010418 54%, #1030c0 60%, #1238c8 64%, #01030c 65%, #01030c 72%, #05162e 73%, #030c1c);
}

.taskbar {
    display: flex;
    align-items: center;
    height: 36px;
    background: linear-gradient(90deg, #304b5d, #2d4958 30%, #23404a 48%, #1f3b42 59%, #4b4e54 65%, #4d4643 72%, #4e4a4b 77%, #4a403d 81%, #413d37 86%, #4a4341 92%, #3c4343);
}

.taskbar button {
    display: flex;
    justify-content: center;
    width: 49px;
}

.taskbar .sys {
    width: 48px;
}

.taskbar .sys:first-child {
    width: 45px;
}

.taskbar .sys + button:not(.sys) {
    margin-left: 3px;
}

.taskbar svg {
    width: 24px;
    height: 24px;
}
```
